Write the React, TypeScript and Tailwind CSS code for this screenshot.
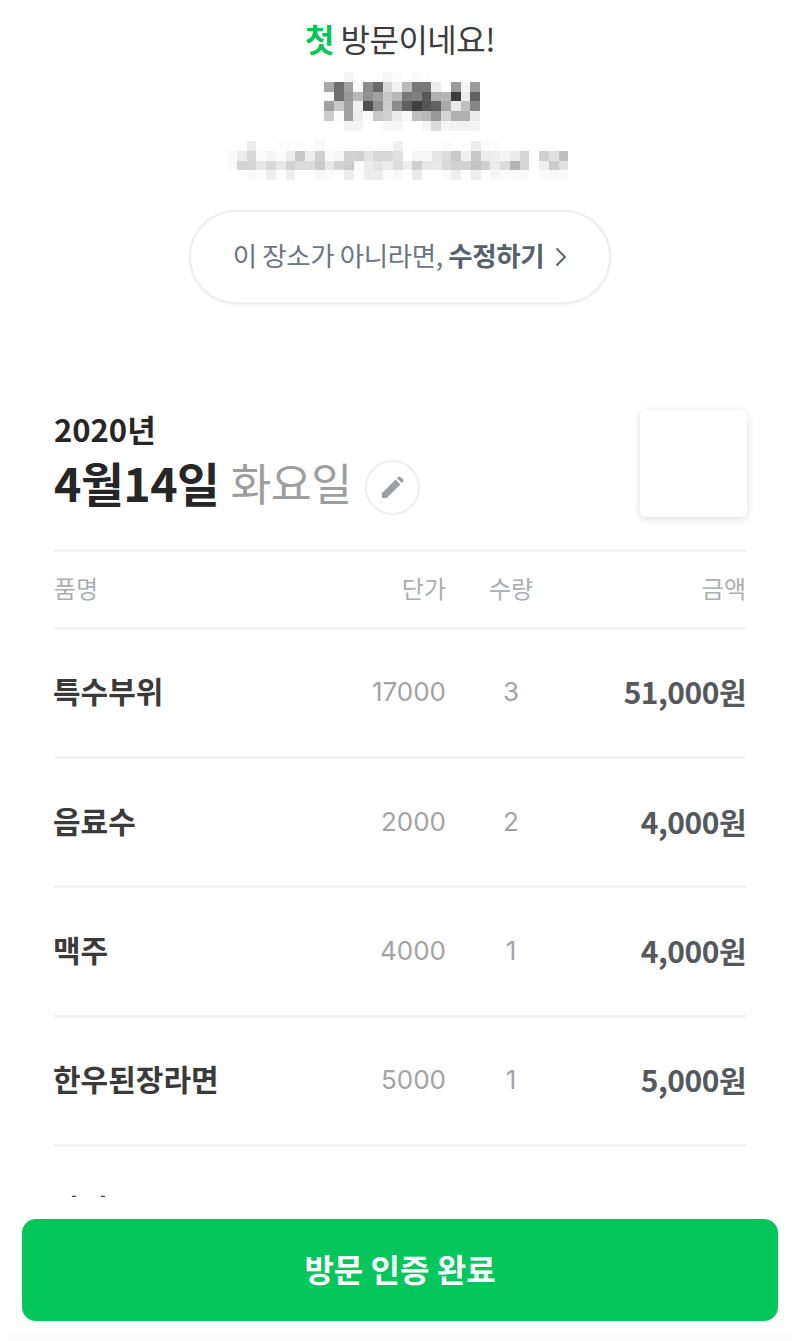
import React from 'react';

const FONT = "font-['Noto_Sans_CJK_KR','Noto_Sans',sans-serif]";

const nameCells = [
  [255, 255, 245, 255, 255, 255, 247, 252, 255, 250, 252, 255, 255, 255, 255, 255],
  [168, 110, 160, 248, 140, 106, 216, 242, 187, 120, 120, 236, 255, 154, 245, 154],
  [252, 112, 152, 184, 144, 160, 200, 184, 120, 128, 88, 176, 181, 62, 236, 98],
  [160, 200, 160, 240, 80, 144, 204, 140, 96, 64, 85, 98, 168, 232, 192, 136],
  [204, 252, 160, 236, 250, 200, 208, 236, 248, 192, 184, 152, 212, 176, 176, 236],
  [255, 255, 244, 244, 255, 255, 246, 246, 255, 255, 244, 220, 244, 242, 242, 244],
];

const addressCells = [
  [255, 255, 236, 255, 255, 252, 252, 252, 255, 248, 255, 255, 255, 255, 255, 255, 255, 240, 255, 255, 255, 255, 250, 255, 255, 236, 250, 252, 255, 255, 255, 255, 255, 255, 255],
  [250, 236, 216, 250, 245, 250, 236, 200, 238, 208, 250, 246, 210, 208, 228, 216, 216, 224, 255, 246, 246, 228, 220, 200, 240, 200, 236, 238, 244, 236, 212, 255, 208, 224, 192],
  [250, 212, 212, 232, 216, 232, 210, 220, 220, 204, 232, 212, 204, 250, 236, 228, 236, 220, 238, 208, 232, 232, 216, 210, 210, 196, 208, 236, 220, 180, 212, 255, 238, 204, 224],
  [255, 255, 250, 252, 238, 252, 238, 255, 255, 248, 250, 255, 236, 252, 236, 236, 252, 248, 255, 234, 255, 255, 250, 238, 255, 238, 255, 246, 250, 248, 250, 255, 250, 250, 250],
];

// the blurred-out shop name and address
function Mosaic({ cells, cell }: { cells: number[][]; cell: number }) {
  const cols = cells[0].length;
  return (
    <svg
      width={cols * cell}
      height={cells.length * cell}
      viewBox={`0 0 ${cols} ${cells.length}`}
      shapeRendering="crispEdges"
      className="blur-[0.6px]"
    >
      {cells.map((row, y) =>
        row.map((v, x) => (
          <rect key={`${x}-${y}`} x={x} y={y} width={1} height={1} fill={`rgb(${v},${v},${v})`} />
        ))
      )}
    </svg>
  );
}

const items = [
  { name: '특수부위', price: '17000', qty: '3', amount: '51,000원' },
  { name: '음료수', price: '2000', qty: '2', amount: '4,000원' },
  { name: '맥주', price: '4000', qty: '1', amount: '4,000원' },
  { name: '한우된장라면', price: '5000', qty: '1', amount: '5,000원' },
  { name: '사리', price: '1000', qty: '1', amount: '1,000원' },
];

const App = () => {
  return (
    <div className={`${FONT} flex h-[1341px] w-[800px] flex-col overflow-hidden bg-white`}>
      <div className="h-[1197px] shrink-0 overflow-hidden">
        <div className="flex flex-col items-center pt-[14px]">
          <h1 className="text-[32px] leading-[48px] tracking-[-0.5px] text-[#3c3c3c]">
            <span className="font-bold text-[#03c75a]">첫</span> 방문이네요!
          </h1>
          <div className="ml-[3px] mt-[10px]">
            <Mosaic cells={nameCells} cell={9.75} />
          </div>
          <div className="mr-[4px] mt-[10px]">
            <Mosaic cells={addressCells} cell={9.75} />
          </div>
          <button className="mt-[30px] flex h-[94px] w-[422px] items-center justify-center rounded-full border-2 border-[#eeeeee] bg-white pb-[4px] text-[26.5px] tracking-[-0.4px] text-[#6b7680] shadow-[0_1px_3px_rgba(0,0,0,0.05)]">
            이 장소가 아니라면,&nbsp;<span className="font-bold text-[#56616b]">수정하기</span>
            <svg width="12" height="20" viewBox="0 0 12 20" fill="none" className="ml-[11px] mt-[4px]">
              <path d="M1.5 1.5 10 10l-8.5 8.5" stroke="#555c62" strokeWidth="1.8" />
            </svg>
          </button>
        </div>

        <div className="mx-[54px] mt-[106px]">
          <div className="flex h-[139px] items-start justify-between">
            <div>
              <div className="-mt-[1px] text-[31px] font-bold leading-[40px] text-[#262626]">2020년</div>
              <div className="mt-[4px] flex items-start">
                <span className="text-[46.5px] font-bold leading-[58px] tracking-[-0.5px] text-[#262626]">4월14일</span>
                <span className="ml-[11px] text-[44.5px] leading-[58px] tracking-[-0.5px] text-[#9e9e9e]">화요일</span>
                <button className="ml-[13px] mt-[7px] flex h-[55px] w-[55px] items-center justify-center rounded-full border-2 border-[#eeeeee] bg-white">
                  <svg width="23" height="23" viewBox="0 0 26 26" fill="#9a9fa3">
                    <path d="M1 19.5 16.5 4l5.5 5.5L6.5 25H1z" />
                    <path d="m18 2.5 1.2-1.2a2.2 2.2 0 0 1 3.1 0l2.4 2.4a2.2 2.2 0 0 1 0 3.1L23.5 8z" />
                  </svg>
                </button>
              </div>
            </div>
            <div className="-mr-[1px] h-[107px] w-[107px] rounded-[6px] bg-white shadow-[0_2px_8px_rgba(0,0,0,0.14)]" />
          </div>

          <div className="grid h-[81px] grid-cols-[1fr_100px_130px_170px] items-center border-y-[3px] border-[#f3f3f3] pb-[3px] text-[24px] text-[#a9aeb3]">
            <span>품명</span>
            <span className="text-right">단가</span>
            <span className="text-center">수량</span>
            <span className="text-right">금액</span>
          </div>

          {items.map((item) => (
            <div
              key={item.name}
              className="grid h-[129.4px] grid-cols-[1fr_100px_130px_170px] items-center border-b-[3px] border-[#f3f3f3]"
            >
              <span className="-ml-[1px] pb-[4px] text-[30px] font-bold text-[#3a3a3a]">{item.name}</span>
              <span className="pb-[2px] text-right font-['Inter',sans-serif] text-[26px] text-[#a3a3a3]">{item.price}</span>
              <span className="pb-[2px] text-center font-['Inter',sans-serif] text-[26px] text-[#a3a3a3]">{item.qty}</span>
              <span className="pb-[2px] text-right text-[30px] font-semibold tracking-[-0.5px] text-[#55595c]">{item.amount}</span>
            </div>
          ))}
        </div>
      </div>

      <div className="flex-1 px-[22px] pt-[22px]">
        <button className="h-[102px] w-full rounded-[14px] bg-[#03c75a] pb-[4px] text-[32px] font-bold text-white">
          방문 인증 완료
        </button>
        <div className="-mx-[13px] mt-[11px] h-[9px] bg-[#fbfbfb]" />
      </div>
    </div>
  );
};

export default App;
